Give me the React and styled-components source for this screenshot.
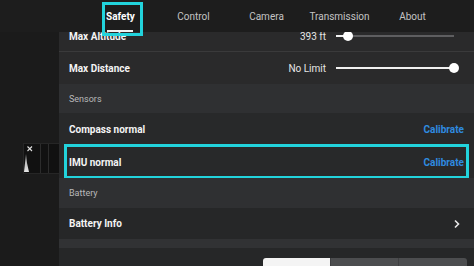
import { createGlobalStyle } from "styled-components";
import styled from "styled-components";

const GlobalStyle = createGlobalStyle`
  html, body {
    margin: 0;
    padding: 0;
    background: #1b1b1b;
  }
  body {
    font-family: Roboto, "Liberation Sans", sans-serif;
  }
`;

const Screen = styled.div`
  width: 474px;
  height: 266px;
  display: flex;
  flex-direction: column;
  overflow: hidden;
  background: #1b1b1b;
`;

const TopBar = styled.div`
  position: relative;
  z-index: 2;
  height: 32px;
  flex: none;
  display: flex;
  justify-content: center;
  padding-left: 59px;
  background: #1d1d1d;
`;

const Tab = styled.div`
  position: relative;
  width: 73px;
  display: flex;
  align-items: center;
  justify-content: center;
  font-size: 10px;
  font-weight: ${(props) => (props.active ? 700 : 400)};
  color: ${(props) => (props.active ? "#ffffff" : "#c4c4c4")};

  &::after {
    content: "";
    display: ${(props) => (props.active ? "block" : "none")};
    position: absolute;
    left: 23px;
    top: 30px;
    width: 26px;
    height: 2px;
    background: #f2f2f2;
  }
`;

const TabMark = styled.div`
  position: absolute;
  left: 18px;
  top: 2px;
  width: 41px;
  height: 34px;
  box-sizing: border-box;
  border: 3px solid #22d3dc;
  pointer-events: none;
`;

const Body = styled.div`
  flex: 1;
  min-height: 0;
  display: flex;
`;

const Sidebar = styled.div`
  width: 59px;
  flex: none;
  box-sizing: border-box;
  padding: 111px 0 0 23px;
  background: #1b1b1b;
`;

const Content = styled.div`
  flex: 1;
  overflow: hidden;
  background: #2a2a2b;
`;

const List = styled.div`
  margin-top: -11px;
  display: flex;
  flex-direction: column;
`;

const Row = styled.div`
  position: relative;
  height: ${(props) => props.h || 32}px;
  flex: none;
  box-sizing: border-box;
  display: flex;
  align-items: center;
  justify-content: space-between;
  padding: 0 ${(props) => props.pr || 10}px 0 10px;
  background: ${(props) => props.bg || "#2a2a2b"};
  border-bottom: ${(props) => (props.divided ? "1px solid #3a3a3b" : "none")};
`;

const RowMark = styled.div`
  position: absolute;
  left: 5px;
  right: 5px;
  top: -2px;
  bottom: -1px;
  border: 3px solid #22d3dc;
  pointer-events: none;
`;

const Label = styled.span`
  font-size: 10px;
  font-weight: 700;
  color: #f4f4f4;
`;

const SectionTitle = styled.span`
  font-size: 9px;
  color: #b9b9ba;
`;

const Value = styled.div`
  display: flex;
  align-items: center;
  gap: 10px;
  font-size: 10px;
  color: #e6e6e6;
`;

const Track = styled.div`
  position: relative;
  width: 118px;
  height: 2px;
  background: #5e5e60;
`;

const Fill = styled.div`
  height: 100%;
  background: #f0f0f0;
`;

const Thumb = styled.div`
  position: absolute;
  top: -4px;
  width: 10px;
  height: 10px;
  margin-left: -5px;
  border-radius: 50%;
  background: #ffffff;
`;

const Calibrate = styled.span`
  font-size: 10px;
  font-weight: 700;
  color: #2f8be0;
`;

const Band = styled.div`
  height: 9px;
  flex: none;
  background: #313234;
`;

const Footer = styled.div`
  height: 30px;
  flex: none;
  padding: 10px 0 0 204px;
  box-sizing: border-box;
  display: flex;
  background: #262728;
`;

const Segment = styled.div`
  width: ${(props) => props.w}px;
  height: 20px;
  background: ${(props) => (props.active ? "#f4f4f4" : "#4c4d4f")};
  border-left: ${(props) => (props.active ? "none" : "1px solid #3e3f41")};
  border-radius: ${(props) => props.radius || "0"};
`;

function Slider({ value }) {
  const pct = `${value * 100}%`;

  return (
    <Track>
      <Fill style={{ width: pct }} />
      <Thumb style={{ left: pct }} />
    </Track>
  );
}

function Chevron() {
  return (
    <svg width="8" height="10" viewBox="0 0 8 10">
      <path d="M2 1.5 L5.5 5 L2 8.5" fill="none" stroke="#e8e8e8" strokeWidth="1.6" />
    </svg>
  );
}

function Thumbnail() {
  return (
    <svg width="37" height="31" viewBox="0 0 37 31">
      <defs>
        <linearGradient id="spike" x1="0" y1="0" x2="0" y2="1">
          <stop offset="0" stopColor="#9a9a9a" />
          <stop offset="1" stopColor="#e6e6e6" />
        </linearGradient>
      </defs>
      <rect x="0.5" y="0.5" width="36" height="30" fill="#111111" stroke="#262626" />
      <line x1="17.5" y1="1" x2="17.5" y2="30" stroke="#2c2c2c" />
      <line x1="25.5" y1="1" x2="25.5" y2="30" stroke="#2c2c2c" />
      <path d="M4.5 3.5 L9 8 M9 3.5 L4.5 8" stroke="#e0e0e0" strokeWidth="1.1" />
      <path d="M1 29 L3 11 L4 20 L6 29 Z" fill="url(#spike)" />
    </svg>
  );
}

const TABS = ["Safety", "Control", "Camera", "Transmission", "About"];

function App() {
  return (
    <Screen>
      <GlobalStyle />
      <TopBar>
        {
          TABS.map((tab, index) => (
            <Tab key={tab} active={index === 0}>
              {tab}
              {index === 0 && <TabMark />}
            </Tab>
          ))
        }
      </TopBar>
      <Body>
        <Sidebar>
          <Thumbnail />
        </Sidebar>
        <Content>
          <List>
            <Row divided pr={20} h={31}>
              <Label>Max Altitude</Label>
              <Value>
                393 ft
                <Slider value={0.1} />
              </Value>
            </Row>
            <Row pr={20}>
              <Label>Max Distance</Label>
              <Value>
                No Limit
                <Slider value={1} />
              </Value>
            </Row>
            <Row h={29} bg="#2f3032">
              <SectionTitle>Sensors</SectionTitle>
            </Row>
            <Row h={33} bg="#28292a">
              <Label>Compass normal</Label>
              <Calibrate>Calibrate</Calibrate>
            </Row>
            <Row h={32} bg="#28292a">
              <Label>IMU normal</Label>
              <Calibrate>Calibrate</Calibrate>
              <RowMark />
            </Row>
            <Row h={30} bg="#2f3032">
              <SectionTitle>Battery</SectionTitle>
            </Row>
            <Row h={31} bg="#262728" pr={13}>
              <Label>Battery Info</Label>
              <Chevron />
            </Row>
            <Band />
            <Footer>
              <Segment active w={67} radius="3px 0 0 0" />
              <Segment w={67} />
              <Segment w={68} radius="0 3px 0 0" />
            </Footer>
          </List>
        </Content>
      </Body>
    </Screen>
  );
}

export default App;
